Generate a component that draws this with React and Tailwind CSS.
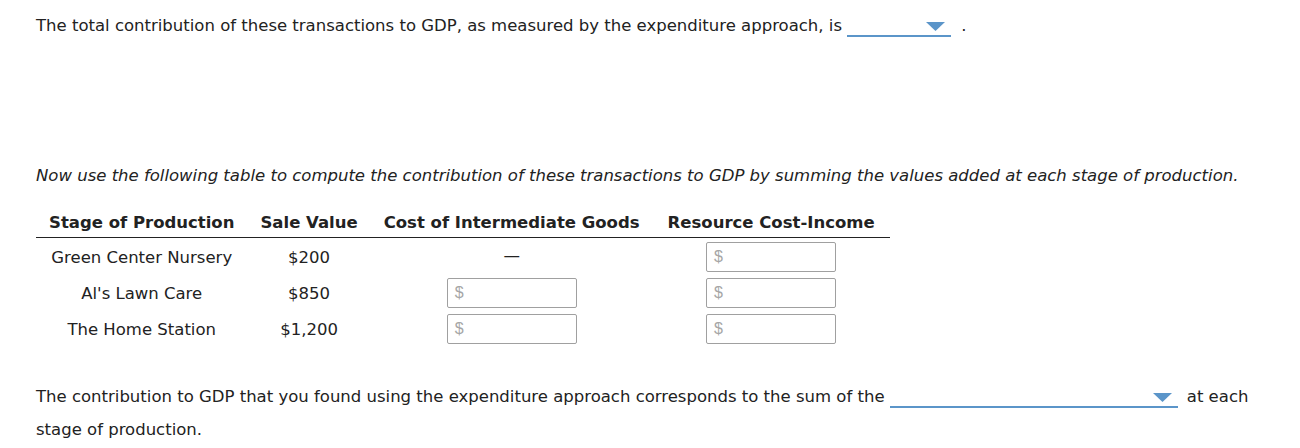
import React from 'react';

const Dropdown = ({ width }) => (
    <span className={`inline-block relative align-baseline border-b-2 border-[#5b95c9] leading-[19px] ${width}`}>
        &nbsp;
        <svg className="absolute right-[6px] top-[6px]" width="19" height="9" viewBox="0 0 19 9">
            <polygon points="0,0 19,0 9.5,9" fill="#5b95c9" />
        </svg>
    </span>
);

const DollarInput = () => (
    <div className="w-[130px] h-[30px] border border-[#a0a0a0] rounded-[2px] flex items-center pl-[7px] text-[#a6a6a6] text-[16px] font-['Liberation_Sans',sans-serif]">
        $
    </div>
);

const rows = [
    { stage: 'Green Center Nursery', sale: '$200', cost: null },
    { stage: "Al's Lawn Care", sale: '$850', cost: true },
    { stage: 'The Home Station', sale: '$1,200', cost: true },
];

export default function App() {
    return (
        <div className="min-h-screen bg-white text-[#222] text-[16.5px] font-['DejaVu_Sans',Verdana,sans-serif] px-[36px] pt-[14px]">
            <p className="leading-[24px]">
                The total contribution of these transactions to GDP, as measured by the expenditure approach, is{' '}
                <Dropdown width="w-[104px]" />
                <span className="ml-[10px]">.</span>
            </p>

            <p className="italic mt-[126px] leading-[24px]">
                Now use the following table to compute the contribution of these transactions to GDP by summing the values added at each stage of production.
            </p>

            <table className="mt-[25px] border-collapse">
                <thead>
                    <tr className="border-b border-[#222]">
                        <th className="font-bold px-[13px] pb-[4px] leading-[20px] whitespace-nowrap">Stage of Production</th>
                        <th className="font-bold px-[13px] pb-[4px] leading-[20px] whitespace-nowrap">Sale Value</th>
                        <th className="font-bold px-[13px] pb-[4px] leading-[20px] whitespace-nowrap">Cost of Intermediate Goods</th>
                        <th className="font-bold px-[15px] pb-[4px] leading-[20px] whitespace-nowrap">Resource Cost-Income</th>
                    </tr>
                </thead>
                <tbody>
                    {rows.map((r, i) => (
                        <tr key={i} className="h-[36px]">
                            <td className="text-center px-[13px] pt-[5px]">{r.stage}</td>
                            <td className="text-center px-[13px] pt-[5px]">{r.sale}</td>
                            <td className="px-[13px] pt-[2px]">
                                {r.cost ? (
                                    <div className="flex justify-center"><DollarInput /></div>
                                ) : (
                                    <div className="text-center">—</div>
                                )}
                            </td>
                            <td className="px-[15px] pt-[2px]">
                                <div className="flex justify-center"><DollarInput /></div>
                            </td>
                        </tr>
                    ))}
                </tbody>
            </table>

            <p className="mt-[34px] leading-[33px]">
                The contribution to GDP that you found using the expenditure approach corresponds to the sum of the{' '}
                <Dropdown width="w-[288px]" />
                <span className="ml-[9px]">at each stage of production.</span>
            </p>
        </div>
    );
}
